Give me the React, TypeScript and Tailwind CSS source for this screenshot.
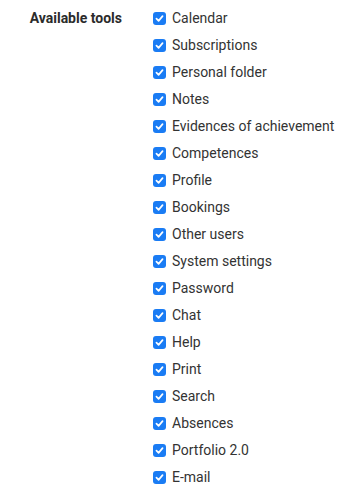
import React from "react";

const tools = [
  "Calendar",
  "Subscriptions",
  "Personal folder",
  "Notes",
  "Evidences of achievement",
  "Competences",
  "Profile",
  "Bookings",
  "Other users",
  "System settings",
  "Password",
  "Chat",
  "Help",
  "Print",
  "Search",
  "Absences",
  "Portfolio 2.0",
  "E-mail",
];

function Check() {
  return (
    <span className="flex h-[13px] w-[13px] shrink-0 items-center justify-center rounded-[3px] bg-[#1a7cf4]">
      <svg width="9" height="9" viewBox="0 0 10 10" fill="none">
        <path d="M1.6 5.2 L4 7.6 L8.4 2.4" stroke="white" strokeWidth="1.9" strokeLinecap="round" strokeLinejoin="round" />
      </svg>
    </span>
  );
}

export default function App() {
  return (
    <div className="flex h-[499px] w-[357px] bg-white pt-[5px] text-[14px] text-[#333]" style={{ fontFamily: "Roboto, 'Liberation Sans', sans-serif" }}>
      <div className="w-[122px] shrink-0 text-right">
        <div className="flex h-[27px] items-center justify-end font-bold text-[#2b2b2b]">Available tools</div>
      </div>
      <div className="ml-[31px] flex flex-col">
        {tools.map((t) => (
          <label key={t} className="flex h-[27px] items-center gap-[6px]">
            <Check />
            <span>{t}</span>
          </label>
        ))}
      </div>
    </div>
  );
}
